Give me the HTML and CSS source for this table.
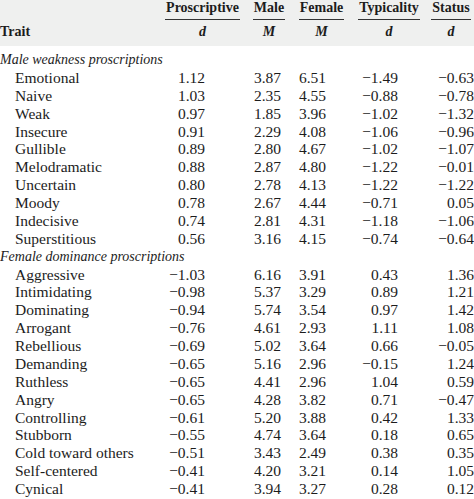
FILE: index.html
```html
<!DOCTYPE html>
<html lang="en">
<head>
    <meta charset="UTF-8">
    <meta name="viewport" content="width=device-width, initial-scale=1.0">
    <title>Proscriptions</title>
    <link rel="stylesheet" href="styles.css">
</head>
<body>
    <table class="stats">
        <colgroup>
            <col class="col-trait">
            <col class="col-pro">
            <col class="col-male">
            <col class="col-female">
            <col class="col-typ">
            <col class="col-status">
        </colgroup>
        <thead>
            <tr class="head-top">
                <th></th>
                <th><span class="rule">Proscriptive</span></th>
                <th><span class="rule">Male</span></th>
                <th><span class="rule">Female</span></th>
                <th><span class="rule">Typicality</span></th>
                <th><span class="rule">Status</span></th>
            </tr>
            <tr class="head-sub">
                <th class="trait-head">Trait</th>
                <th><i>d</i></th>
                <th><i>M</i></th>
                <th><i>M</i></th>
                <th><i>d</i></th>
                <th><i>d</i></th>
            </tr>
        </thead>
        <tbody>
            <tr class="group first"><td colspan="6">Male weakness proscriptions</td></tr>
            <tr><td>Emotional</td><td>1.12</td><td>3.87</td><td>6.51</td><td>−1.49</td><td>−0.63</td></tr>
            <tr><td>Naive</td><td>1.03</td><td>2.35</td><td>4.55</td><td>−0.88</td><td>−0.78</td></tr>
            <tr><td>Weak</td><td>0.97</td><td>1.85</td><td>3.96</td><td>−1.02</td><td>−1.32</td></tr>
            <tr><td>Insecure</td><td>0.91</td><td>2.29</td><td>4.08</td><td>−1.06</td><td>−0.96</td></tr>
            <tr><td>Gullible</td><td>0.89</td><td>2.80</td><td>4.67</td><td>−1.02</td><td>−1.07</td></tr>
            <tr><td>Melodramatic</td><td>0.88</td><td>2.87</td><td>4.80</td><td>−1.22</td><td>−0.01</td></tr>
            <tr><td>Uncertain</td><td>0.80</td><td>2.78</td><td>4.13</td><td>−1.22</td><td>−1.22</td></tr>
            <tr><td>Moody</td><td>0.78</td><td>2.67</td><td>4.44</td><td>−0.71</td><td>0.05</td></tr>
            <tr><td>Indecisive</td><td>0.74</td><td>2.81</td><td>4.31</td><td>−1.18</td><td>−1.06</td></tr>
            <tr><td>Superstitious</td><td>0.56</td><td>3.16</td><td>4.15</td><td>−0.74</td><td>−0.64</td></tr>
            <tr class="group"><td colspan="6">Female dominance proscriptions</td></tr>
            <tr><td>Aggressive</td><td>−1.03</td><td>6.16</td><td>3.91</td><td>0.43</td><td>1.36</td></tr>
            <tr><td>Intimidating</td><td>−0.98</td><td>5.37</td><td>3.29</td><td>0.89</td><td>1.21</td></tr>
            <tr><td>Dominating</td><td>−0.94</td><td>5.74</td><td>3.54</td><td>0.97</td><td>1.42</td></tr>
            <tr><td>Arrogant</td><td>−0.76</td><td>4.61</td><td>2.93</td><td>1.11</td><td>1.08</td></tr>
            <tr><td>Rebellious</td><td>−0.69</td><td>5.02</td><td>3.64</td><td>0.66</td><td>−0.05</td></tr>
            <tr><td>Demanding</td><td>−0.65</td><td>5.16</td><td>2.96</td><td>−0.15</td><td>1.24</td></tr>
            <tr><td>Ruthless</td><td>−0.65</td><td>4.41</td><td>2.96</td><td>1.04</td><td>0.59</td></tr>
            <tr><td>Angry</td><td>−0.65</td><td>4.28</td><td>3.82</td><td>0.71</td><td>−0.47</td></tr>
            <tr><td>Controlling</td><td>−0.61</td><td>5.20</td><td>3.88</td><td>0.42</td><td>1.33</td></tr>
            <tr><td>Stubborn</td><td>−0.55</td><td>4.74</td><td>3.64</td><td>0.18</td><td>0.65</td></tr>
            <tr><td>Cold toward others</td><td>−0.51</td><td>3.43</td><td>2.49</td><td>0.38</td><td>0.35</td></tr>
            <tr><td>Self-centered</td><td>−0.41</td><td>4.20</td><td>3.21</td><td>0.14</td><td>1.05</td></tr>
            <tr><td>Cynical</td><td>−0.41</td><td>3.94</td><td>3.27</td><td>0.28</td><td>0.12</td></tr>
        </tbody>
    </table>
</body>
</html>
```

FILE: styles.css
```css
html, body {
    margin: 0;
    padding: 0;
    overflow: hidden;
    background: #fff;
}
body {
    font-family: "Liberation Serif", "Times New Roman", serif;
    color: #1c1c1c;
}
.stats {
    width: 474px;
    table-layout: fixed;
    border-collapse: collapse;
}
.col-trait { width: 160px; }
.col-pro { width: 85px; }
.col-male { width: 48px; }
.col-female { width: 57px; }
.col-typ { width: 78px; }
.col-status { width: 46px; }

thead th {
    background-color: #eff0ef;
    font-size: 14px;
    font-weight: bold;
    text-align: center;
    vertical-align: bottom;
    padding: 0;
    white-space: nowrap;
}
.head-top th {
    height: 19px;
}
.rule {
    display: inline-block;
    line-height: 13px;
    padding: 0 1px 5px;
    border-bottom: 1px solid #333;
}
.head-sub th {
    height: 19px;
    line-height: 14px;
    padding-bottom: 7px;
}
.head-sub .trait-head {
    text-align: left;
}

tbody td {
    font-size: 15.5px;
    line-height: 17.875px;
    padding: 0;
    text-align: right;
    white-space: nowrap;
}
tbody td:nth-child(1) {
    text-align: left;
    padding-left: 15px;
}
tbody td:nth-child(2) { padding-right: 40px; }
tbody td:nth-child(3) { padding-right: 12px; }
tbody td:nth-child(4) { padding-right: 24px; }
tbody td:nth-child(5) { padding-right: 30px; }
tbody td:nth-child(6) { padding-right: 0; }

.group td,
tbody .group td:nth-child(1) {
    font-size: 14px;
    font-style: italic;
    text-align: left;
    padding-left: 0;
}
.first td {
    padding-top: 5px;
}
```
